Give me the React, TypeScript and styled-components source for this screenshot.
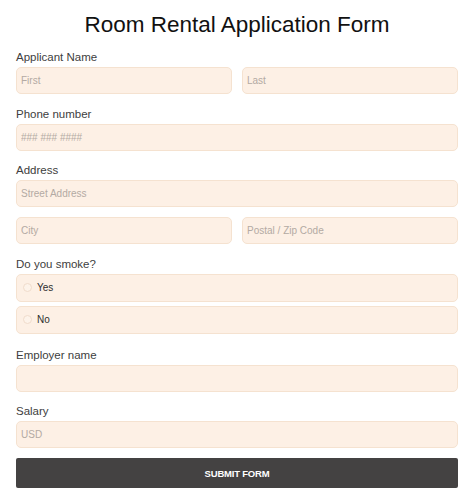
import styled, { createGlobalStyle } from "styled-components";

const GlobalStyle = createGlobalStyle`
  body {
    margin: 0;
    background: #ffffff;
    font-family: "Liberation Sans", Arial, sans-serif;
  }
  * {
    box-sizing: border-box;
  }
`;

const Page = styled.form`
  width: 474px;
  padding: 11px 16px 0;
  display: flex;
  flex-direction: column;
`;

const Title = styled.h1`
  margin: 0 0 11px;
  font-size: 22.5px;
  line-height: 28px;
  font-weight: 400;
  text-align: center;
  color: #111111;
`;

const Field = styled.div<{ $extra?: number }>`
  display: flex;
  flex-direction: column;
  margin-bottom: ${(p) => 12.5 + (p.$extra ?? 0)}px;
`;

const Label = styled.label`
  font-size: 11.5px;
  line-height: 14px;
  color: #404040;
  margin-bottom: 3px;
`;

const Row = styled.div`
  display: grid;
  grid-template-columns: 1fr 1fr;
  column-gap: 10px;
`;

const Stack = styled.div<{ $gap: number }>`
  display: flex;
  flex-direction: column;
  gap: ${(p) => p.$gap}px;
`;

const Input = styled.input`
  width: 100%;
  height: 27px;
  padding: 0 4px;
  border: 1px solid #f5e2d0;
  border-radius: 5px;
  background: #fdf0e5;
  font-family: "Liberation Sans", Arial, sans-serif;
  font-size: 10px;
  color: #333333;
  outline: none;
  &::placeholder {
    color: #b3aaa3;
  }
`;

const Choice = styled.label`
  display: flex;
  align-items: center;
  gap: 5px;
  height: 28px;
  padding: 0 6px;
  border: 1px solid #f5e2d0;
  border-radius: 5px;
  background: #fdf0e5;
  font-size: 10px;
  color: #2e2e2e;
`;

const Dot = styled.span`
  width: 9px;
  height: 9px;
  border-radius: 50%;
  border: 1px solid #f0dccb;
  background: #fdf3ea;
`;

const Submit = styled.button`
  height: 30px;
  border: none;
  border-radius: 2px;
  background: #444242;
  color: #ffffff;
  font-family: "Liberation Sans", Arial, sans-serif;
  font-weight: 700;
  font-size: 9.5px;
  letter-spacing: -0.2px;
  text-transform: uppercase;
`;

export default function App() {
  return (
    <>
      <GlobalStyle />
      <Page onSubmit={(e) => e.preventDefault()}>
        <Title>Room Rental Application Form</Title>

        <Field>
          <Label>Applicant Name</Label>
          <Row>
            <Input placeholder="First" />
            <Input placeholder="Last" />
          </Row>
        </Field>

        <Field>
          <Label>Phone number</Label>
          <Input placeholder="### ### ####" />
        </Field>

        <Field>
          <Label>Address</Label>
          <Stack $gap={10}>
            <Input placeholder="Street Address" />
            <Row>
              <Input placeholder="City" />
              <Input placeholder="Postal / Zip Code" />
            </Row>
          </Stack>
        </Field>

        <Field $extra={1.5}>
          <Label>Do you smoke?</Label>
          <Stack $gap={4}>
            <Choice>
              <Dot />
              Yes
            </Choice>
            <Choice>
              <Dot />
              No
            </Choice>
          </Stack>
        </Field>

        <Field>
          <Label>Employer name</Label>
          <Input />
        </Field>

        <Field $extra={-2.5}>
          <Label>Salary</Label>
          <Input placeholder="USD" />
        </Field>

        <Submit type="submit">Submit Form</Submit>
      </Page>
    </>
  );
}
